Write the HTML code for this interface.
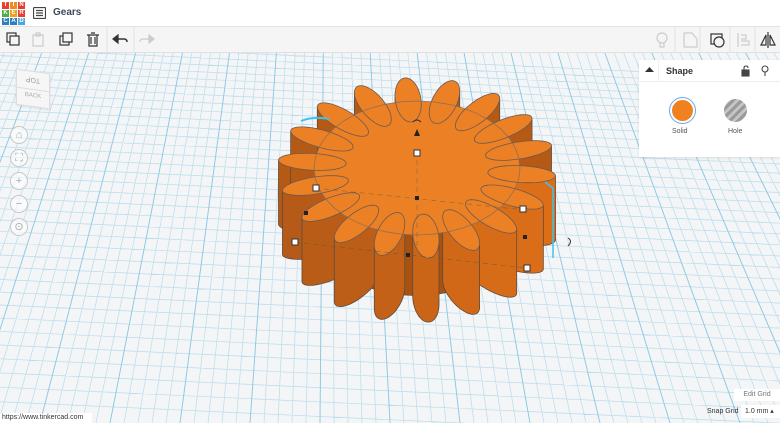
<!DOCTYPE html>
<html><head><meta charset="utf-8">
<style>
*{margin:0;padding:0;box-sizing:border-box}
html,body{width:780px;height:423px;overflow:hidden}
body{font-family:"Liberation Sans",sans-serif;background:#f3f5f7;position:relative}
#top{position:absolute;left:0;top:0;width:780px;height:27px;background:#fff;border-bottom:1px solid #e2e2e2}
#tb{position:absolute;left:0;top:27px;width:780px;height:26px;background:#f5f5f5;border-bottom:1px solid #e0e0e0}
.logo{position:absolute;left:2px;top:2px;width:23px;height:23px}
.logo div{position:absolute;width:7px;height:7px;font-size:6px;color:#fff;font-weight:bold;text-align:center;line-height:7px;overflow:hidden}
#panel{position:absolute;left:639px;top:60px;width:141px;height:97px;background:#fff;box-shadow:0 1px 3px rgba(0,0,0,.1)}
.small{position:absolute;font-size:7px;color:#555}
.nav{position:absolute;left:10px;width:18px;height:18px;border:1px solid #c8c8c8;border-radius:50%;background:rgba(255,255,255,.6);color:#aaa;font-size:11px;text-align:center;line-height:16px}
</style></head><body>
<svg id="grid" width="780" height="423" style="position:absolute;left:0;top:0"></svg>
<svg id="gear" width="780" height="423" style="position:absolute;left:0;top:0"></svg>
<div id="top">
 <div class="logo">
  <div style="left:0;top:0;background:#e83e2d">T</div><div style="left:8px;top:0;background:#f08a24">I</div><div style="left:16px;top:0;background:#e83e2d">N</div>
  <div style="left:0;top:8px;background:#4daf4a">K</div><div style="left:8px;top:8px;background:#f0a020">E</div><div style="left:16px;top:8px;background:#e83e2d">R</div>
  <div style="left:0;top:16px;background:#2d7fc1">C</div><div style="left:8px;top:16px;background:#2d7fc1">A</div><div style="left:16px;top:16px;background:#48a9e0">D</div>
 </div>
 <svg style="position:absolute;left:33px;top:7px" width="13" height="12"><rect x="0.5" y="0.5" width="12" height="11" fill="none" stroke="#444" stroke-width="1.2" rx="1"/><path d="M3 3.5h7M3 6h7M3 8.5h7" stroke="#444" stroke-width="1.2"/></svg>
 <div style="position:absolute;left:53px;top:7px;font-size:10px;color:#3c4a5a;font-weight:bold">Gears</div>
</div>
<div id="tb">
 <svg width="780" height="26" style="position:absolute;left:0;top:0" fill="none" stroke="#333" stroke-width="1.2">
  <rect x="7" y="6" width="9" height="9"/><rect x="10" y="9" width="9" height="9" fill="#f5f5f5"/>
  <g stroke="#ccc"><rect x="33" y="8" width="10" height="11"/><rect x="36" y="6" width="4" height="3"/></g>
  <rect x="60" y="9" width="9" height="9"/><rect x="63" y="6" width="9" height="9" fill="#f5f5f5"/>
  <path d="M87 8h12M89 8v11h8V8M91 6h4M91 10v7M95 10v7"/>
  <path d="M117 12h7q3 0 3 3" stroke-width="1.5"/><path d="M113 12l5-4v8z" fill="#333"/>
  <g stroke="#ccc"><path d="M150 12h-7q-3 0-3 3"/><path d="M154 12l-5-4v8z" fill="#ccc"/></g>
  <path d="M107 0v26M134 0v26" stroke="#e4e4e4"/>
  <path d="M675 0v26M700 0v26M730 0v26M755 0v26" stroke="#e4e4e4"/>
  <g stroke="#ccc"><circle cx="662" cy="11" r="5"/><path d="M660 16v4h4v-4"/>
  <path d="M684 6h8l5 6v8h-13z"/><path d="M738 6v14M741 8h5v4h-5M741 14h8v4h-8"/></g>
  <rect x="711" y="7" width="11" height="10"/><circle cx="719" cy="15" r="5" fill="#f5f5f5"/>
  <path d="M768 5v16" /><path d="M766 8l-5 10h5zM770 8l5 10h-5z"/>
 </svg>
</div>
<div id="panel">
 <div style="position:absolute;left:0;top:0;width:141px;height:22px;border-bottom:1px solid #eee"></div>
 <div style="position:absolute;left:19px;top:0;width:1px;height:22px;background:#eee"></div>
 <svg style="position:absolute;left:6px;top:7px" width="9" height="6"><path d="M0 5l4.5-5 4.5 5z" fill="#333"/></svg>
 <div style="position:absolute;left:27px;top:6px;font-size:9px;color:#333;font-weight:bold">Shape</div>
 <svg style="position:absolute;left:102px;top:5px" width="36" height="12" fill="none" stroke="#444" stroke-width="1.1"><rect x="1" y="5" width="7" height="6" fill="#444"/><path d="M3 5V3q0-2 2-2t2 2"/><circle cx="24" cy="4" r="3"/><path d="M24 7v4"/></svg>
 <div style="position:absolute;left:30px;top:37px;width:27px;height:27px;border-radius:50%;border:1.5px solid #6fa6e6;background:#fff"></div>
 <div style="position:absolute;left:33px;top:40px;width:21px;height:21px;border-radius:50%;background:#f08121"></div>
 <div style="position:absolute;left:85px;top:39px;width:23px;height:23px;border-radius:50%;background:repeating-linear-gradient(135deg,#9a9a9a 0 3px,#c6c6c6 3px 6px)"></div>
 <div style="position:absolute;left:33px;top:68px;font-size:7px;color:#555">Solid</div>
 <div style="position:absolute;left:89px;top:68px;font-size:7px;color:#555">Hole</div>
</div>
<div class="nav" style="top:126px">⌂</div>
<div class="nav" style="top:149px">⛶</div>
<div class="nav" style="top:172px">+</div>
<div class="nav" style="top:195px">−</div>
<div class="nav" style="top:218px">⊙</div>
<div style="position:absolute;left:16px;top:71px;width:34px;height:36px;background:#f6f6f6;border:1px solid #ddd;transform:skewY(8deg);box-shadow:0 1px 2px rgba(0,0,0,.1)">
 <div style="font-size:7px;color:#999;text-align:center;margin-top:4px;transform:rotate(180deg)">TOP</div>
 <div style="border-top:1px solid #ddd;font-size:6px;color:#aaa;text-align:center;margin-top:6px;padding-top:3px">BACK</div>
</div>
<div style="position:absolute;left:734px;top:389px;width:46px;height:12px;background:#fff;font-size:7px;color:#777;text-align:center;line-height:12px">Edit Grid</div>
<div class="small" style="left:707px;top:408px;color:#333">Snap Grid</div>
<div style="position:absolute;left:741px;top:405px;width:39px;height:13px;background:#fff;font-size:7px;color:#333;line-height:13px;padding-left:4px">1.0 mm ▴</div>
<div style="position:absolute;left:0;top:413px;width:92px;height:10px;background:#fff;font-size:7px;color:#333;line-height:10px;padding-left:2px">https://www.tinkercad.com</div>
<script>
var NS="http://www.w3.org/2000/svg";
function el(p,t,a){var e=document.createElementNS(NS,t);for(var k in a)e.setAttribute(k,a[k]);p.appendChild(e);return e;}
var g=document.getElementById("grid"),s="";
var vx=330,vy=-700;
for(var i=-60;i<=60;i++){var bx=390+i*14;s+="M"+vx+","+vy+"L"+(vx+(bx-vx)*1.9)+","+(vy+(423-vy)*1.9)+" ";}
for(var j=0;j<60;j++){var y=60+j*j*0.12+j*6.5;if(y>430)break;s+="M0,"+(y-18)+"L780,"+(y+18)+" ";}
el(g,"path",{d:s,stroke:"#b9dcec","stroke-width":"0.7",fill:"none"});
var s2="";
for(var i=-12;i<=12;i++){var bx=390+i*70;s2+="M"+vx+","+vy+"L"+(vx+(bx-vx)*1.9)+","+(vy+(423-vy)*1.9)+" ";}
el(g,"path",{d:s2,stroke:"#8cc8e2","stroke-width":"0.9",fill:"none"});

var G=document.getElementById("gear");
var cx=417,cy=168,sx=103,sy=67,H=64,N=18;
function P(u,v){return [cx+u*sx,cy+v*sy];}
function ell(uc,vc,ra,rt,ang){var pts=[];for(var k=0;k<40;k++){var t=k/40*Math.PI*2;var a=ra*Math.cos(t),b=rt*Math.sin(t);var u=uc+a*Math.cos(ang)-b*Math.sin(ang),v=vc+a*Math.sin(ang)+b*Math.cos(ang);pts.push(P(u,v));}return pts;}
function poly(pts,dy){return pts.map(function(p){return p[0].toFixed(1)+","+(p[1]+dy).toFixed(1)}).join(" ");}
function side(pts,fill){
 var il=0,ir=0;pts.forEach(function(p,i){if(p[0]<pts[il][0])il=i;if(p[0]>pts[ir][0])ir=i;});
 var l=pts[il],r=pts[ir];
 el(G,"polygon",{points:poly(pts,H),fill:fill,stroke:"#5e4a3e","stroke-width":"0.8"});
 el(G,"polygon",{points:[l,r,[r[0],r[1]+H],[l[0],l[1]+H]].map(function(p){return p[0]+","+p[1]}).join(" "),fill:fill});
 el(G,"line",{x1:l[0],y1:l[1],x2:l[0],y2:l[1]+H,stroke:"#5e4a3e","stroke-width":"0.8"});
 el(G,"line",{x1:r[0],y1:r[1],x2:r[0],y2:r[1]+H,stroke:"#5e4a3e","stroke-width":"0.8"});
}
var items=[];
for(var i=0;i<N;i++){var a=i/N*Math.PI*2+0.09;items.push({a:a,v:Math.sin(a),c:Math.cos(a)});}
var disk=ell(0,0,0.95,0.95,0);
var teeth=items.map(function(t){return {v:t.v,c:t.c,pts:ell(1.02*Math.cos(t.a),1.02*Math.sin(t.a),0.33,0.125,t.a)};});
teeth.filter(function(t){return t.v<0}).forEach(function(t){side(t.pts,"#b45a14");});
side(disk,"#a9520f");
teeth.filter(function(t){return t.v>=0}).sort(function(a,b){return a.v-b.v}).forEach(function(t){
 var r=Math.round(200+20*t.c),gg=Math.round(100+10*t.c);side(t.pts,"rgb("+r+","+gg+",24)");});
teeth.forEach(function(t){el(G,"polygon",{points:poly(t.pts,0),fill:"#ec8025"});});
var core=ell(0,0,1.0,1.0,0);
el(G,"polygon",{points:poly(core,0),fill:"#ec8025"});
teeth.forEach(function(t){el(G,"polygon",{points:poly(t.pts,0),fill:"none",stroke:"#6b5a52","stroke-width":"0.8"});});
el(G,"polygon",{points:poly(core,0),fill:"none",stroke:"#7b6a62","stroke-width":"0.8","stroke-opacity":"0.8"});
el(G,"path",{d:"M417 160V250M315 188L525 210M295 242L527 268",stroke:"#553","stroke-width":"0.6","stroke-dasharray":"5 4",fill:"none","opacity":"0.6"});
[[417,153],[316,188],[523,209],[295,242],[527,268]].forEach(function(p){el(G,"rect",{x:p[0]-3,y:p[1]-3,width:6,height:6,fill:"#fff",stroke:"#333","stroke-width":"1"});});
[[417,198],[306,213],[525,237],[408,255]].forEach(function(p){el(G,"rect",{x:p[0]-2,y:p[1]-2,width:4,height:4,fill:"#222"});});
el(G,"path",{d:"M414 136l3-7 3 7z",fill:"#222"});
el(G,"path",{d:"M413 122q4-4 8 0M568 238q5 3 0 8",stroke:"#333",fill:"none","stroke-width":"1"});
el(G,"path",{d:"M301 121q12-5 28-2",stroke:"#3bc4ef",fill:"none","stroke-width":"2"});
el(G,"path",{d:"M545 182l8 6v70",stroke:"#3bc4ef",fill:"none","stroke-width":"1.5"});
</script>
</body></html>
